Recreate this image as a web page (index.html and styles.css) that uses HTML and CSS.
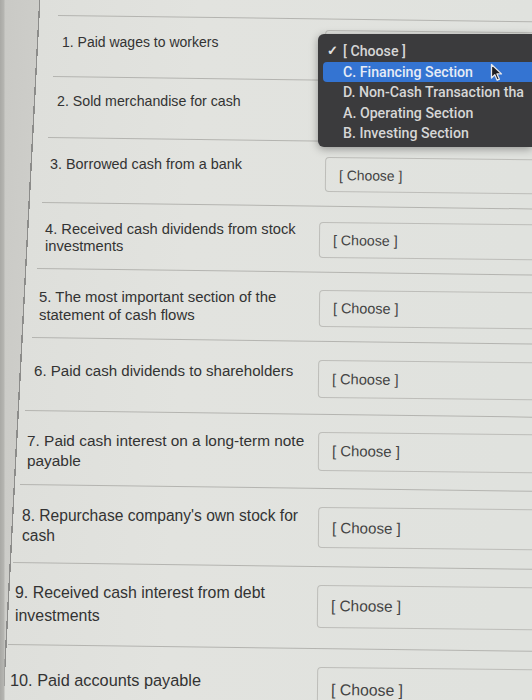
FILE: index.html
```html
<!DOCTYPE html>
<html>
<head>
<meta charset="utf-8">
<title>Statement of cash flows</title>
<link rel="stylesheet" href="styles.css">
</head>
<body>
<div class="page">
  <div class="sep s0"></div>
  <div class="row r1"><div class="q">1. Paid wages to workers</div><div class="sel"></div></div>
  <div class="sep s1"></div>
  <div class="row r2"><div class="q">2. Sold merchandise for cash</div><div class="sel"></div></div>
  <div class="sep s2"></div>
  <div class="row r3"><div class="q">3. Borrowed cash from a bank</div><div class="sel"><span>[ Choose ]</span></div></div>
  <div class="sep s3"></div>
  <div class="row r4"><div class="q">4. Received cash dividends from stock<br>investments</div><div class="sel"><span>[ Choose ]</span></div></div>
  <div class="sep s4"></div>
  <div class="row r5"><div class="q">5. The most important section of the<br>statement of cash flows</div><div class="sel"><span>[ Choose ]</span></div></div>
  <div class="sep s5"></div>
  <div class="row r6"><div class="q">6. Paid cash dividends to shareholders</div><div class="sel"><span>[ Choose ]</span></div></div>
  <div class="sep s6"></div>
  <div class="row r7"><div class="q">7. Paid cash interest on a long-term note<br>payable</div><div class="sel"><span>[ Choose ]</span></div></div>
  <div class="sep s7"></div>
  <div class="row r8"><div class="q">8. Repurchase company's own stock for<br>cash</div><div class="sel"><span>[ Choose ]</span></div></div>
  <div class="sep s8"></div>
  <div class="row r9"><div class="q">9. Received cash interest from debt<br>investments</div><div class="sel"><span>[ Choose ]</span></div></div>
  <div class="sep s9"></div>
  <div class="row r10"><div class="q">10. Paid accounts payable</div><div class="sel"><span>[ Choose ]</span></div></div>
</div>

<div class="menu">
  <div class="item"><span class="check">&#10003;</span>[ Choose ]</div>
  <div class="item on">C. Financing Section</div>
  <div class="item">D. Non-Cash Transaction tha</div>
  <div class="item">A. Operating Section</div>
  <div class="item">B. Investing Section</div>
</div>

<svg class="cursor" width="14" height="20" viewBox="0 0 14 20">
  <path d="M1.5 1.5 L1.5 15 L4.8 11.8 L7.2 17.2 L9.4 16.2 L7 10.9 L11.5 10.9 Z" fill="#1e1e22" stroke="#e8e8ea" stroke-width="1.3" stroke-linejoin="round"/>
</svg>
</body>
</html>
```

FILE: styles.css
```css
html, body {
  margin: 0;
  padding: 0;
}

body {
  width: 532px;
  height: 700px;
  overflow: hidden;
  position: relative;
  font-family: "Liberation Sans", Arial, Helvetica, sans-serif;
  color: #363636;
  background:
    linear-gradient(to right, #a9a9a5 0, #b6b6b2 4px, rgba(0,0,0,0) 5px),
    linear-gradient(93deg, #c9c9c5 0, #cdcdc9 39px, #8c8c8a 39px, #8c8c8a 40.4px, #dedfdb 40.4px, #e2e3df 200px, #e0e2de 532px);
  background-size: 532px 700px, 532px 700px;
  background-repeat: no-repeat;
}

.page {
  padding-top: 15px;
  width: 532px;
}

.sep {
  height: 1px;
  background: #b4b4b0;
  margin-right: -40px;
  transform: rotate(0.75deg);
  transform-origin: 0 0;
}

.s0 { margin-left: 58px; }
.s1 { margin-left: 53px; }
.s2 { margin-left: 48px; }
.s3 { margin-left: 42px; }
.s4 { margin-left: 37px; }
.s5 { margin-left: 32px; }
.s6 { margin-left: 25px; }
.s7 { margin-left: 20px; }
.s8 { margin-left: 13px; }
.s9 { margin-left: 8px; }

.row {
  display: flex;
  align-items: flex-start;
  height: var(--h);
  font-size: var(--fs);
  line-height: var(--lh);
}

.q {
  flex: none;
  box-sizing: border-box;
  width: var(--sx);
  padding-left: var(--pl);
  margin-top: var(--mt);
  white-space: nowrap;
  color: #333333;
}

.sel {
  flex: 1 0 auto;
  box-sizing: border-box;
  margin-top: var(--smt);
  height: var(--sh);
  margin-right: -10px;
  border: 1px solid #bdbdb9;
  border-radius: 4px;
  display: flex;
  align-items: center;
  padding-left: 13px;
  font-size: calc(var(--fs) - 0.5px);
  color: #444444;
  transform: rotate(0.6deg);
  transform-origin: 0 50%;
}

.r1  { --h: 60px; --fs: 14px;   --lh: 18px;   --mt: 17px; --pl: 62px; --sx: 325px; --smt: 14px; --sh: 34px; }
.r2  { --h: 60px; --fs: 14.2px; --lh: 18px;   --mt: 15px; --pl: 57px; --sx: 325px; --smt: 12px; --sh: 34px; }
.r3  { --h: 64px; --fs: 14.4px; --lh: 18px;   --mt: 17px; --pl: 50px; --sx: 325px; --smt: 19px; --sh: 35px; }
.r4  { --h: 65px; --fs: 14.7px; --lh: 17px;   --mt: 18px; --pl: 45px; --sx: 319px; --smt: 19px; --sh: 36px; }
.r5  { --h: 68px; --fs: 14.9px; --lh: 17.5px; --mt: 20px; --pl: 39px; --sx: 319px; --smt: 21px; --sh: 37px; }
.r6  { --h: 72px; --fs: 15.1px; --lh: 19px;   --mt: 23px; --pl: 34px; --sx: 318px; --smt: 22px; --sh: 38px; }
.r7  { --h: 73px; --fs: 15.4px; --lh: 19.5px; --mt: 20px; --pl: 27px; --sx: 318px; --smt: 21px; --sh: 39px; }
.r8  { --h: 77px; --fs: 15.6px; --lh: 20px;   --mt: 21px; --pl: 22px; --sx: 318px; --smt: 22px; --sh: 41px; }
.r9  { --h: 81px; --fs: 15.9px; --lh: 22.5px; --mt: 19px; --pl: 15px; --sx: 317px; --smt: 22px; --sh: 43px; }
.r10 { --h: 60px; --fs: 16.3px; --lh: 22px;   --mt: 24px; --pl: 10px; --sx: 317px; --smt: 22px; --sh: 45px; }

.menu {
  position: absolute;
  left: 318px;
  top: 34px;
  width: 214px;
  height: 113px;
  box-sizing: border-box;
  padding: 7px 0 7px 5px;
  background: #3b3b3d;
  border-radius: 6px 0 0 6px;
  box-shadow: 0 2px 8px rgba(0, 0, 0, 0.35);
  font-family: Roboto, "Liberation Sans", sans-serif;
  font-weight: 500;
  font-size: 14.2px;
  color: #d6d6d6;
  white-space: nowrap;
  overflow: hidden;
}

.item {
  height: 20.5px;
  line-height: 20.5px;
  padding-left: 20px;
  position: relative;
}

.item.on {
  background: #3474d2;
  border-radius: 4px 0 0 4px;
  color: #e6ecf6;
}

.check {
  position: absolute;
  left: 4px;
  top: 0;
  font-size: 13px;
  font-weight: 700;
  color: #e0e0e0;
}

.cursor {
  position: absolute;
  left: 490px;
  top: 63px;
}
```
